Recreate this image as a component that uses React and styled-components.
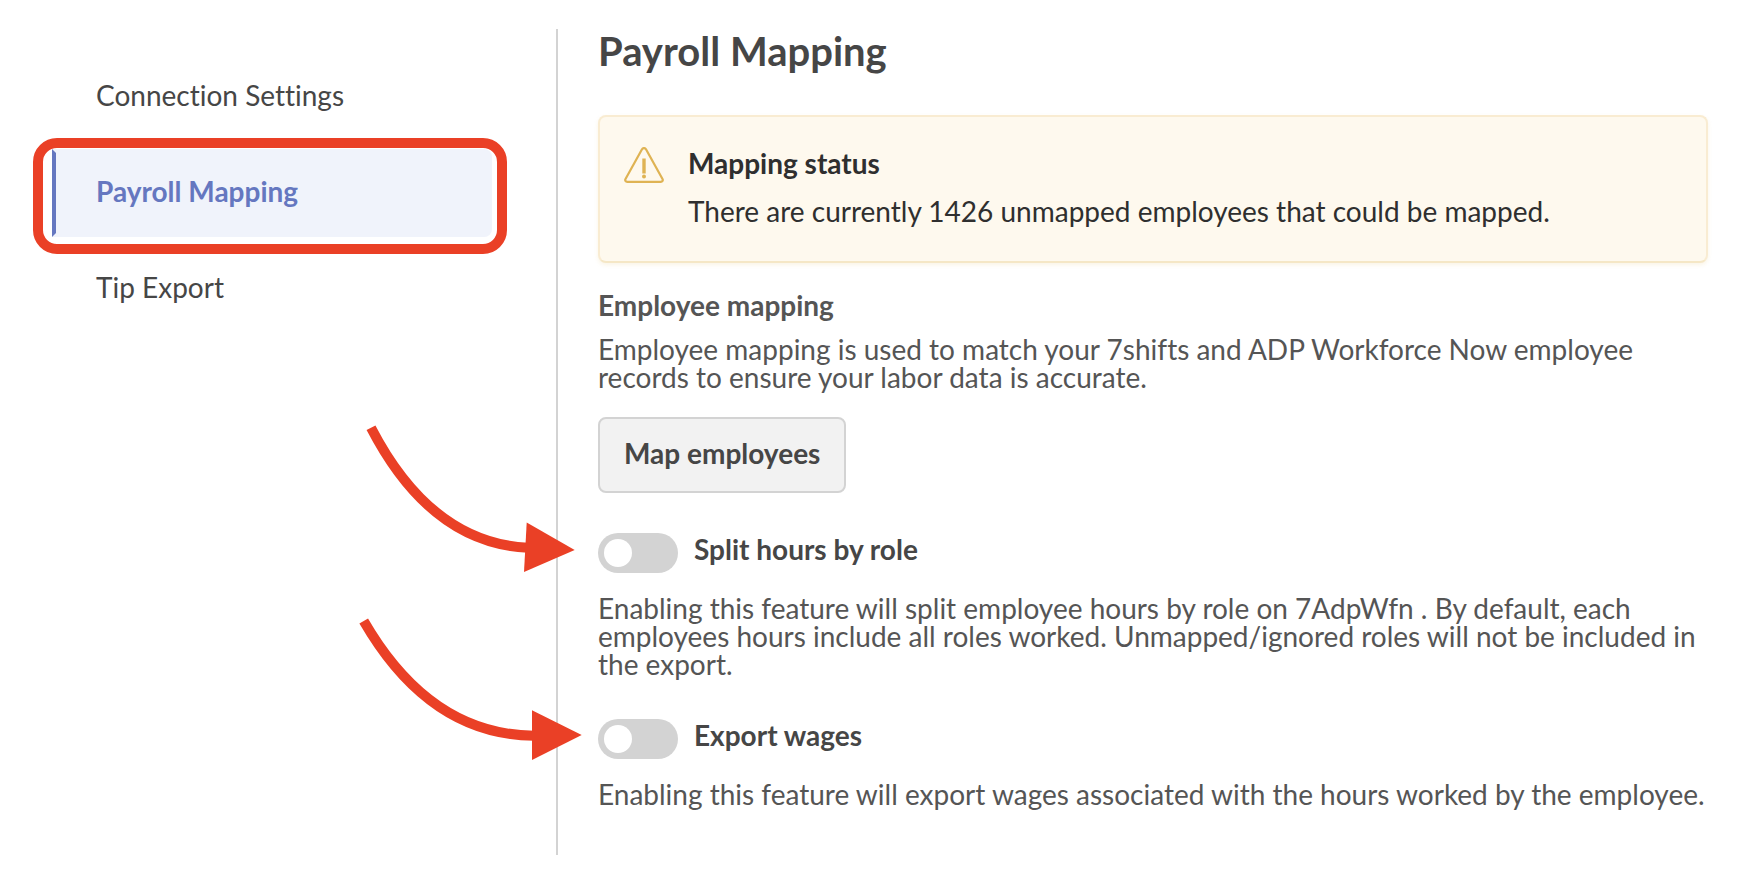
import React from 'react';
import styled, { createGlobalStyle } from 'styled-components';

const GlobalStyle = createGlobalStyle`
  * {
    box-sizing: border-box;
  }

  body {
    margin: 0;
    background: #fff;
    color: #464646;
    font-family: Lato, 'Open Sans', sans-serif;
    font-size: 28px;
    line-height: 28px;
    font-variant-ligatures: none;
  }
`;

const Page = styled.div`
  display: flex;
  align-items: flex-start;
  padding: 29px 48px 31px 52px;
`;

const Sidebar = styled.nav`
  flex: 0 0 440px;
  margin: 24px 64px 0 0;
`;

const NavList = styled.ul`
  display: flex;
  flex-direction: column;
  gap: 8px;
  margin: 0;
  padding: 0;
  list-style: none;
`;

const NavItem = styled.li`
  position: relative;
`;

const NavLink = styled.a`
  display: block;
  padding: 24px 36px 28px 40px;
  border: 4px solid transparent;
  border-left-color: ${(p) => (p.$active ? '#6577c0' : 'transparent')};
  border-radius: 0 8px 8px 0;
  background: ${(p) => (p.$active ? '#f0f3fb' : 'transparent')};
  color: ${(p) => (p.$active ? '#6577c0' : '#464646')};
  font-weight: ${(p) => (p.$active ? 700 : 400)};
  text-decoration: none;
`;

const Highlight = styled.span`
  position: absolute;
  inset: -11px -15px -17px -19px;
  border: 10px solid #ea4026;
  border-radius: 24px;
  pointer-events: none;
`;

const Content = styled.main`
  flex: 1;
  min-width: 0;
  padding: 0 0 47px 40px;
  border-left: 2px solid #d3d3d3;
`;

const Title = styled.h1`
  margin: 0 0 42px;
  font-size: 40px;
  font-weight: 700;
  line-height: 44px;
`;

const Alert = styled.section`
  display: flex;
  gap: 24px;
  padding: 30px 24px 34px;
  border: 2px solid #f9ecd2;
  border-bottom-color: #f5e7c6;
  border-radius: 8px;
  background: #fef9ee;
  color: #2f2f2f;
  line-height: 32px;
  box-shadow: 0 2px 4px rgba(222, 178, 78, 0.15);
`;

const AlertTitle = styled.h2`
  margin: 0 0 16px;
  font-size: 28px;
  font-weight: 700;
`;

const AlertText = styled.p`
  margin: 0;
`;

const SectionTitle = styled.h2`
  margin: 28px 0 16px;
  color: #555;
  font-size: 28px;
  font-weight: 700;
`;

const Text = styled.p`
  margin: 0;
  color: #555;
`;

const Button = styled.button`
  margin: 26px 0 0;
  padding: 20px 24px 24px;
  border: 2px solid #d3d3d3;
  border-radius: 8px;
  background: #f2f2f2;
  color: #464646;
  font: inherit;
  font-weight: 700;
  cursor: pointer;
`;

const Feature = styled.section`
  position: relative;
  margin-top: ${(p) => p.$gap}px;
`;

const FeatureLabel = styled.label`
  display: flex;
  gap: 16px;
  margin-bottom: 21px;
  font-weight: 700;
  line-height: 32px;
  cursor: pointer;
`;

const Switch = styled.input`
  appearance: none;
  flex: none;
  width: 80px;
  height: 40px;
  margin: 0;
  padding: 6px;
  border-radius: 20px;
  background: #d3d3d3;
  cursor: pointer;

  &::before {
    content: '';
    display: block;
    width: 28px;
    height: 28px;
    border-radius: 50%;
    background: #fff;
  }

  &:checked {
    background: #6577c0;
  }

  &:checked::before {
    margin-left: auto;
  }
`;

const Arrow = styled.svg`
  position: absolute;
  top: -110px;
  right: calc(100% + 14px);
  pointer-events: none;
`;

const WarningSvg = styled.svg`
  flex: none;
`;

const WarningIcon = () => (
  <WarningSvg width="40" height="36" viewBox="0 0 40 36" fill="none" aria-hidden="true">
    <path
      d="M18 2.2 1.5 32c-.8 1.5.1 2.8 1.7 2.8h33.6c1.6 0 2.5-1.3 1.7-2.8L22 2.2c-.9-1.5-3.1-1.5-4 0Z"
      stroke="#dfb353"
      strokeWidth="2.2"
      strokeLinejoin="round"
    />
    <path d="M20 11.5v15" stroke="#dfb353" strokeWidth="3.4" />
    <circle cx="20" cy="29.5" r="2" fill="#dfb353" />
  </WarningSvg>
);

const navItems = [
  { label: 'Connection Settings' },
  { label: 'Payroll Mapping', active: true },
  { label: 'Tip Export' },
];

const features = [
  {
    id: 'split-hours',
    label: 'Split hours by role',
    text: 'Enabling this feature will split employee hours by role on 7AdpWfn . By default, each employees hours include all roles worked. Unmapped/ignored roles will not be included in the export.',
    gap: 40,
    shaft: 'M15 4.7Q74.9 120.2 172 124.8',
    head: '170.7,99.5 218.7,127 168,149',
  },
  {
    id: 'export-wages',
    label: 'Export wages',
    text: 'Enabling this feature will export wages associated with the hours worked by the employee.',
    gap: 41,
    shaft: 'M7.7 12Q73.7 126 178 126.7',
    head: '176,101.3 225.7,126 176,151',
  },
];

const App = () => (
  <>
    <GlobalStyle />
    <Page>
      <Sidebar>
        <NavList>
          {navItems.map((item) => (
            <NavItem key={item.label}>
              <NavLink href="#" $active={item.active}>
                {item.label}
              </NavLink>
              {item.active && <Highlight />}
            </NavItem>
          ))}
        </NavList>
      </Sidebar>

      <Content>
        <Title>Payroll Mapping</Title>

        <Alert>
          <WarningIcon />
          <div>
            <AlertTitle>Mapping status</AlertTitle>
            <AlertText>There are currently 1426 unmapped employees that could be mapped.</AlertText>
          </div>
        </Alert>

        <SectionTitle>Employee mapping</SectionTitle>
        <Text>
          Employee mapping is used to match your 7shifts and ADP Workforce Now employee records to
          ensure your labor data is accurate.
        </Text>
        <Button type="button">Map employees</Button>

        {features.map((feature) => (
          <Feature key={feature.id} $gap={feature.gap}>
            <FeatureLabel htmlFor={feature.id}>
              <Switch type="checkbox" role="switch" id={feature.id} />
              {feature.label}
            </FeatureLabel>
            <Text>{feature.text}</Text>
            <Arrow width="228" height="152" viewBox="0 0 228 152" aria-hidden="true">
              <path d={feature.shaft} fill="none" stroke="#ea4026" strokeWidth="10" />
              <polygon points={feature.head} fill="#ea4026" />
            </Arrow>
          </Feature>
        ))}
      </Content>
    </Page>
  </>
);

export default App;
